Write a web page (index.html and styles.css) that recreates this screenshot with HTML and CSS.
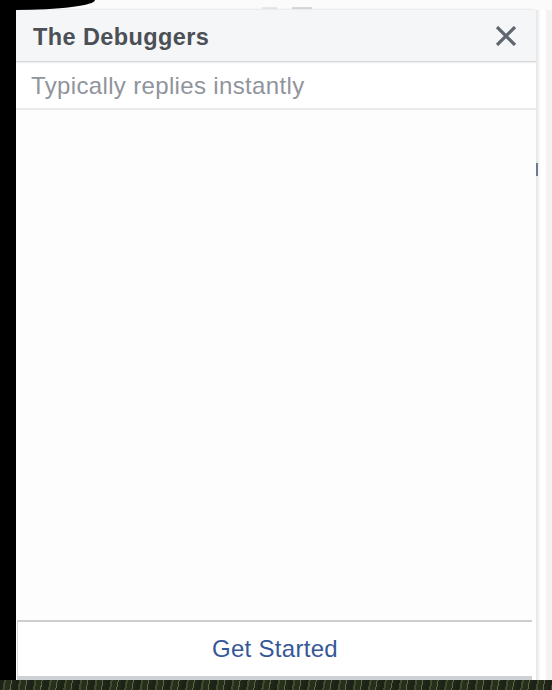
FILE: index.html
```html
<!DOCTYPE html>
<html lang="en">

<head>
  <meta charset="UTF-8" />
  <meta name="viewport" content="width=device-width, initial-scale=1.0" />
  <title>The Debuggers</title>
  <link rel="stylesheet" href="styles.css">
</head>

<body>
  <div class="page">
    <div class="top-strip">
      <div class="blob"></div>
      <div class="top-marks"></div>
    </div>
    <div class="middle">
      <div class="left-bar"></div>
      <div class="chat">
        <div class="chat-header">
          <h1>The Debuggers</h1>
          <button class="chat-close" aria-label="Close">
            <svg width="22" height="20" viewBox="0 0 22 20">
              <path d="M2 1 L20 19 M20 1 L2 19" stroke="#606770" stroke-width="3.2" fill="none" />
            </svg>
          </button>
        </div>
        <div class="chat-status">Typically replies instantly</div>
        <div class="chat-body"></div>
        <div class="chat-footer">
          <a href="#" class="start-button">Get Started</a>
        </div>
      </div>
      <div class="side">
        <div class="side-mark"></div>
      </div>
    </div>
    <div class="ground"></div>
  </div>
</body>

</html>
```

FILE: styles.css
```css
body {
  font-family: "Liberation Sans", Arial, sans-serif;
  background-color: #fbfbfb;
  margin: 0;
  padding: 0;
}

.page {
  width: 552px;
  height: 690px;
  display: flex;
  flex-direction: column;
  overflow: hidden;
}

.top-strip {
  height: 10px;
  display: flex;
  align-items: flex-end;
}

.blob {
  width: 95px;
  height: 10px;
  background-color: #000;
  border-bottom-right-radius: 80px 10px;
}

.top-marks {
  width: 50px;
  height: 2px;
  margin-left: 167px;
  margin-bottom: 1px;
  background: linear-gradient(90deg, #e8e8e8 0 30%, transparent 30% 60%, #d8d8d8 60% 100%);
}

.middle {
  flex: 1;
  display: flex;
}

.left-bar {
  width: 16px;
  background-color: #000;
}

.chat {
  width: 520px;
  display: flex;
  flex-direction: column;
  background-color: #fff;
  border-radius: 4px 4px 0 0;
  box-shadow: 0 -1px 2px rgba(0, 0, 0, 0.08);
}

.chat-header {
  height: 51px;
  display: flex;
  align-items: center;
  justify-content: space-between;
  padding: 0 19px 0 17px;
  background-color: #f5f6f7;
  border-bottom: 1px solid #d4d6da;
  border-radius: 4px 4px 0 0;
  box-shadow: 0 1px 2px rgba(0, 0, 0, 0.08);
}

h1 {
  margin: 4px 0 0;
  font-size: 23.5px;
  font-weight: bold;
  color: #4b4f56;
  letter-spacing: 0.4px;
}

.chat-close {
  display: flex;
  padding: 0;
  border: none;
  background: none;
  cursor: pointer;
}

.chat-status {
  height: 48px;
  display: flex;
  align-items: center;
  padding: 2px 0 0 15px;
  box-sizing: border-box;
  font-size: 24px;
  letter-spacing: 0.35px;
  color: #90949c;
  border-bottom: 2px solid #e9eaec;
}

.chat-body {
  flex: 1;
  background-color: #fdfdfd;
}

.chat-footer {
  display: flex;
  margin-right: 4px;
}

.start-button {
  flex: 1;
  height: 54px;
  display: flex;
  align-items: center;
  justify-content: center;
  margin-left: 1px;
  border-top: 2px solid #cdcdcd;
  border-left: 1px solid #d8d8d8;
  border-bottom: 4px solid #cdd0d4;
  font-size: 24px;
  letter-spacing: 0.3px;
  color: #365899;
  text-decoration: none;
  background-color: #fff;
}

.side {
  flex: 1;
  position: relative;
  background: linear-gradient(90deg, #e4e4e4 0, #f6f6f6 3px, #fff 5px, #fff 9px, #f3f3f3 11px);
}

.side-mark {
  position: absolute;
  left: 0;
  top: 153px;
  width: 2px;
  height: 13px;
  background-color: #6a7a90;
}

.ground {
  height: 10px;
  background-color: #262d1e;
  background-image: repeating-linear-gradient(100deg, #1c2216 0 4px, #3f4a2e 4px 6px, #262e1c 6px 11px, #5d6744 11px 12px, #20261a 12px 15px);
}
```
